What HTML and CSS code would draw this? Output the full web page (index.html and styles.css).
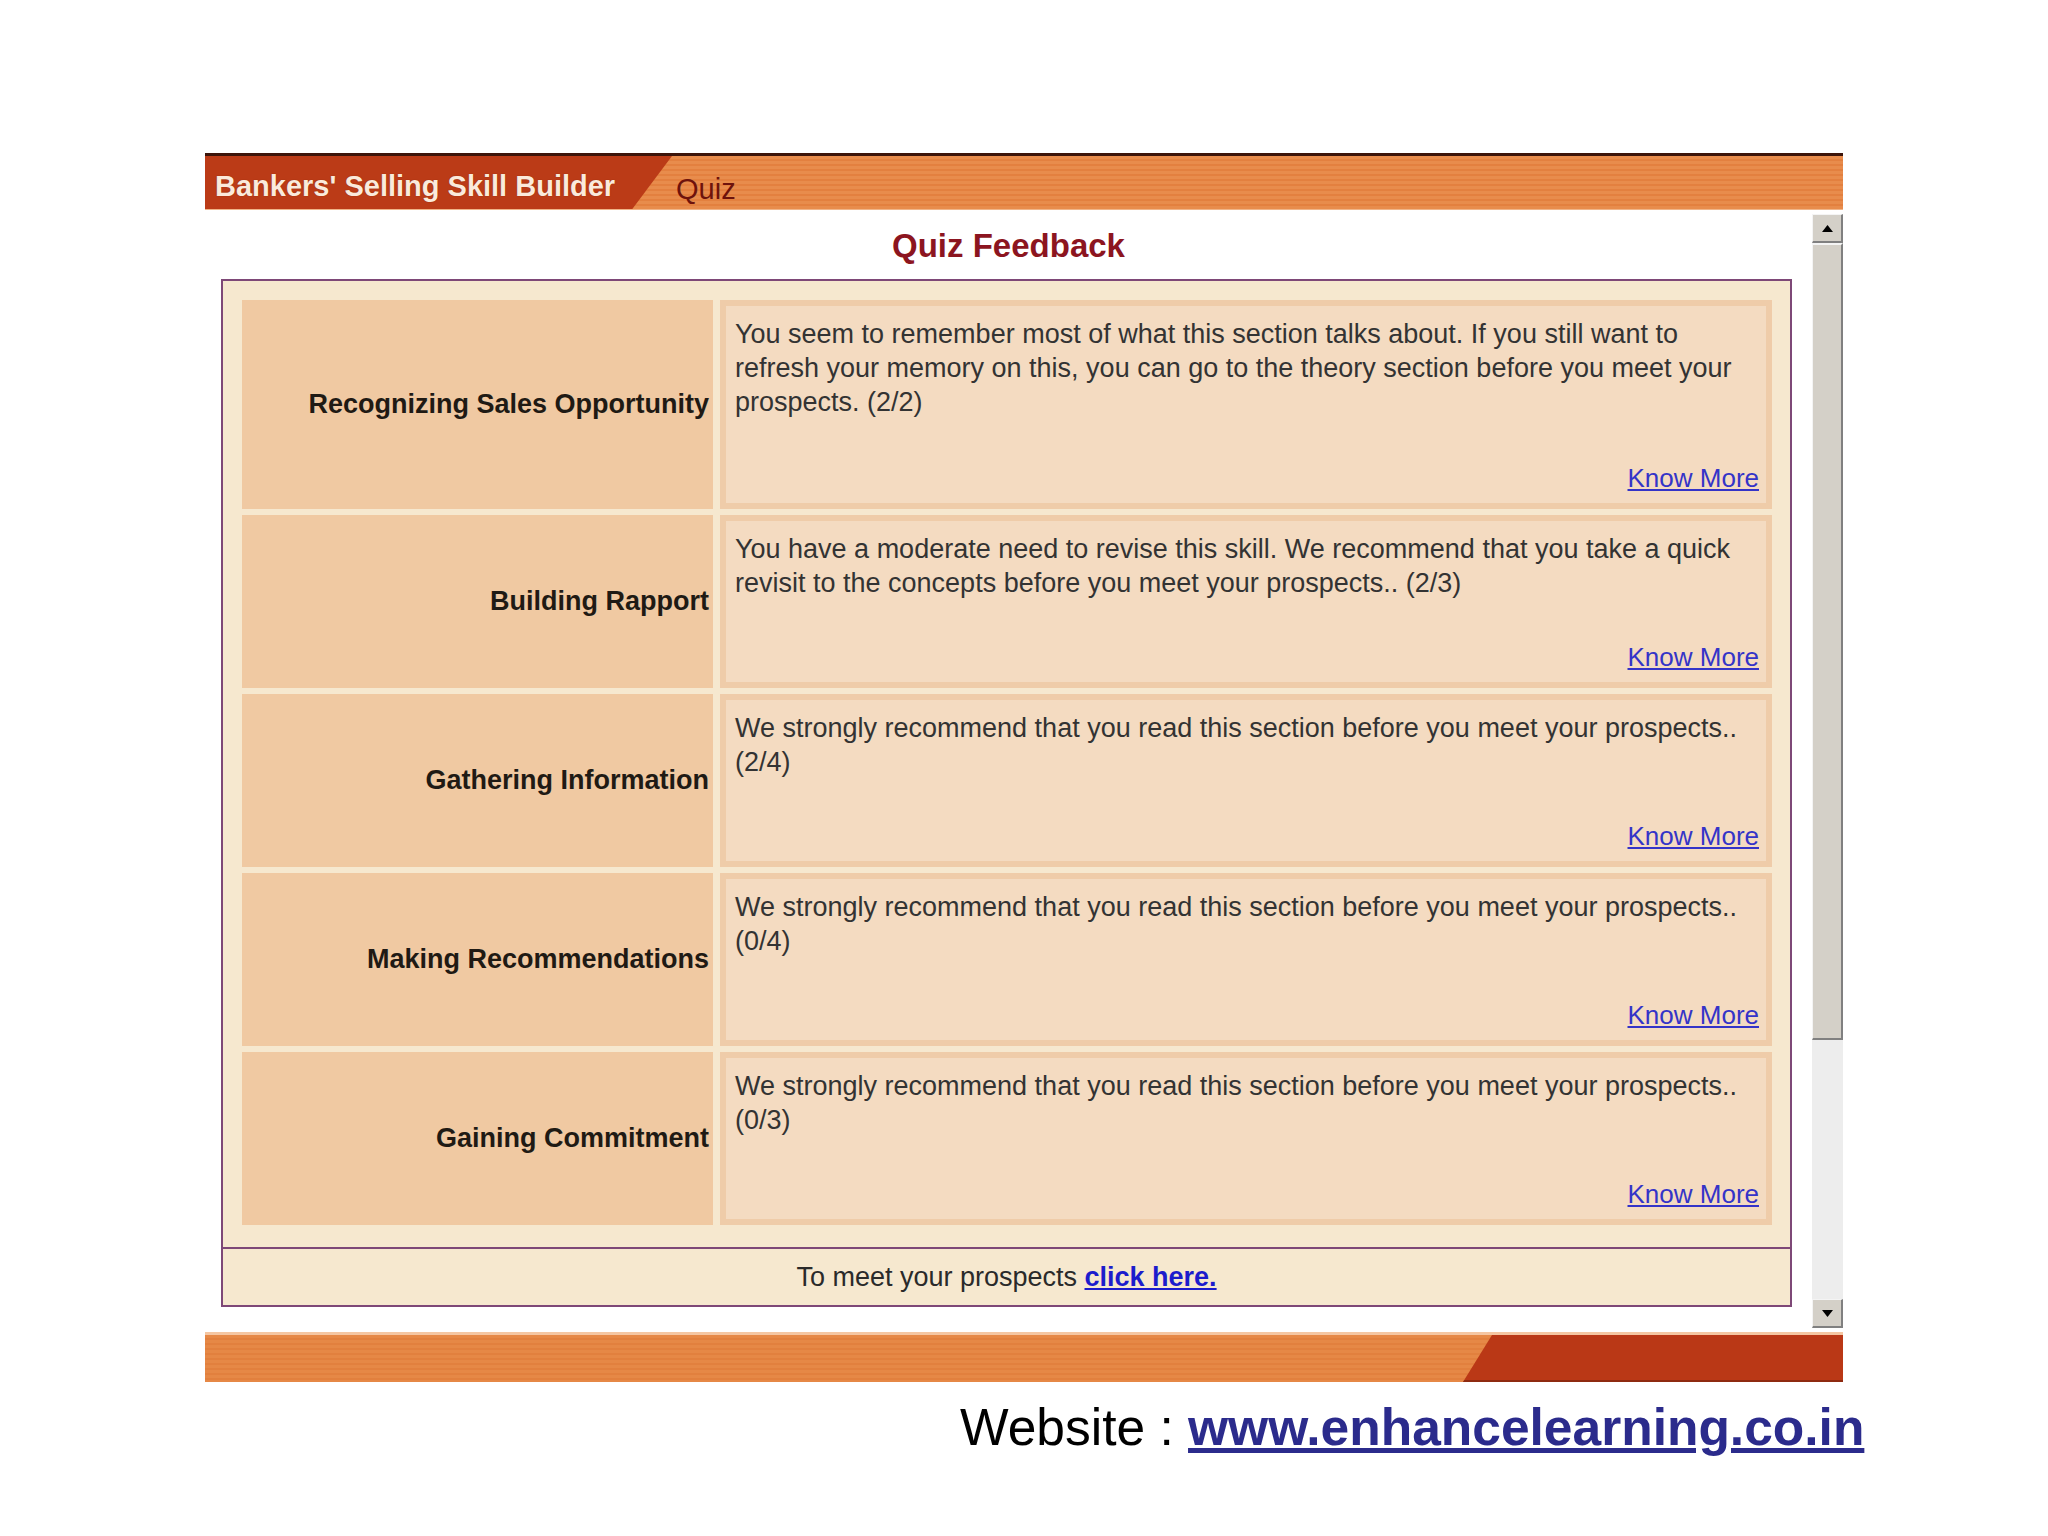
FILE: index.html
```html
<!DOCTYPE html>
<html lang="en">
<head>
    <meta charset="UTF-8">
    <title>Quiz Feedback - Bankers' Selling Skill Builder</title>
    <link rel="stylesheet" href="styles.css">
</head>
<body>
    <div class="slide">
        <div class="app">
            <div class="titlebar">
                <div class="brand">Bankers' Selling Skill Builder</div>
                <div class="section-name">Quiz</div>
            </div>

            <div class="viewport">
                <div class="page">
                    <h1 class="page-title">Quiz Feedback</h1>

                    <div class="feedback">
                        <div class="rows">
                            <div class="skill skill-first">Recognizing Sales Opportunity</div>
                            <div class="result">
                                <p>You seem to remember most of what this section talks about. If you still want to refresh your memory on this, you can go to the theory section before you meet your prospects. (2/2)</p>
                                <a href="#">Know More</a>
                            </div>

                            <div class="skill">Building Rapport</div>
                            <div class="result">
                                <p>You have a moderate need to revise this skill. We recommend that you take a quick revisit to the concepts before you meet your prospects.. (2/3)</p>
                                <a href="#">Know More</a>
                            </div>

                            <div class="skill">Gathering Information</div>
                            <div class="result">
                                <p>We strongly recommend that you read this section before you meet your prospects.. (2/4)</p>
                                <a href="#">Know More</a>
                            </div>

                            <div class="skill">Making Recommendations</div>
                            <div class="result">
                                <p>We strongly recommend that you read this section before you meet your prospects.. (0/4)</p>
                                <a href="#">Know More</a>
                            </div>

                            <div class="skill">Gaining Commitment</div>
                            <div class="result">
                                <p>We strongly recommend that you read this section before you meet your prospects.. (0/3)</p>
                                <a href="#">Know More</a>
                            </div>
                        </div>

                        <div class="prospects">To meet your prospects <a href="#">click here.</a></div>
                    </div>
                </div>

                <div class="scrollbar">
                    <div class="sb-button">
                        <svg width="11" height="7" viewBox="0 0 11 7"><path d="M5.5 0 L11 7 L0 7 Z" fill="#000"/></svg>
                    </div>
                    <div class="sb-thumb"></div>
                    <div class="sb-track"></div>
                    <div class="sb-button">
                        <svg width="11" height="7" viewBox="0 0 11 7"><path d="M0 0 L11 0 L5.5 7 Z" fill="#000"/></svg>
                    </div>
                </div>
            </div>

            <div class="footerbar">
                <div class="footer-red"></div>
            </div>
        </div>

        <p class="website">Website : <a href="#">www.enhancelearning.co.in</a></p>
    </div>
</body>
</html>
```

FILE: styles.css
```css
body {
    margin: 0;
    background: #fff;
    font-family: "Liberation Sans", Arial, sans-serif;
    color: #2d2d2d;
}
.slide {
    width: 2048px;
    height: 1536px;
    padding-top: 153px;
    box-sizing: border-box;
}
.app {
    margin-left: 205px;
    width: 1638px;
}

/* top bar */
.titlebar {
    height: 53px;
    border-top: 3px solid #3c140a;
    display: flex;
    align-items: stretch;
    background: repeating-linear-gradient(to bottom, #e88c4c 0 3px, #e3803f 3px 5px);
    border-bottom: 1px solid #f0b488;
}
.brand {
    width: 457px;
    padding: 7px 0 0 10px;
    display: flex;
    align-items: center;
    background: #bb3b17;
    clip-path: polygon(0 0, 100% 0, 91.5% 100%, 0 100%);
    color: #fbeadb;
    font-weight: bold;
    font-size: 29px;
    text-shadow: 0 0 1px #7a2008;
}
.section-name {
    margin-left: 4px;
    padding-top: 13px;
    display: flex;
    align-items: center;
    color: #6e130c;
    font-size: 29px;
}

/* white page area with its scrollbar */
.viewport {
    height: 1122px;
    display: flex;
    background: #fff;
}
.page {
    flex: 1;
}
.page-title {
    margin: 16px 0 13px;
    height: 40px;
    line-height: 40px;
    text-align: center;
    font-size: 33px;
    color: #8c1520;
}
.feedback {
    margin-left: 16px;
    width: 1567px;
    border: 2px solid #7e4877;
    background: #f6e8cf;
}
.rows {
    padding: 19px 18px 22px 19px;
    display: grid;
    grid-template-columns: 471px 1fr;
    grid-auto-rows: 173px;
    grid-template-rows: 209px;
    gap: 6px 7px;
}
.skill {
    background: #f0c9a2;
    display: flex;
    align-items: center;
    justify-content: flex-end;
    padding-right: 4px;
    font-weight: bold;
    font-size: 27px;
    color: #1f1a14;
}
.result {
    background: #f4dbc1;
    border: 6px solid #efcca9;
    padding: 11px 7px 8px 9px;
    display: flex;
    flex-direction: column;
    justify-content: space-between;
    font-size: 27px;
    line-height: 34px;
    color: #333;
}
.result p {
    margin: 0;
    padding-right: 14px;
}
.result a {
    align-self: flex-end;
    color: #3434c8;
    font-size: 26px;
}
.prospects {
    border-top: 2px solid #7e4877;
    height: 56px;
    line-height: 56px;
    text-align: center;
    font-size: 27px;
    color: #2a2a2a;
}
.prospects a {
    color: #1c1ccc;
    font-weight: bold;
}

.scrollbar {
    width: 31px;
    padding: 4px 0;
    display: flex;
    flex-direction: column;
}
.sb-button {
    height: 29px;
    box-sizing: border-box;
    background: #d4d0c8;
    border-top: 1px solid #f4f4f4;
    border-left: 1px solid #f4f4f4;
    border-right: 2px solid #808080;
    border-bottom: 2px solid #808080;
    display: flex;
    align-items: center;
    justify-content: center;
}
.sb-thumb {
    height: 797px;
    box-sizing: border-box;
    background: #d4d0c8;
    border-top: 2px solid #f4f4f4;
    border-left: 1px solid #f4f4f4;
    border-right: 2px solid #808080;
    border-bottom: 2px solid #808080;
}
.sb-track {
    flex: 1;
    background: #ededed;
}

/* bottom bar */
.footerbar {
    height: 47px;
    border-top: 3px solid #f5c6a2;
    display: flex;
    background: repeating-linear-gradient(to bottom, #e68846 0 3px, #e2803e 3px 5px);
}
.footer-red {
    margin-left: auto;
    width: 380px;
    background: #ba3816;
    border-bottom: 2px solid #8e2a10;
    clip-path: polygon(29px 0, 100% 0, 100% 100%, 0 100%);
}

.website {
    margin: 15px 0 0 960px;
    font-size: 51.5px;
    line-height: 60px;
    color: #000;
    white-space: nowrap;
}
.website a {
    color: #2b2b8c;
    font-weight: bold;
}
```
